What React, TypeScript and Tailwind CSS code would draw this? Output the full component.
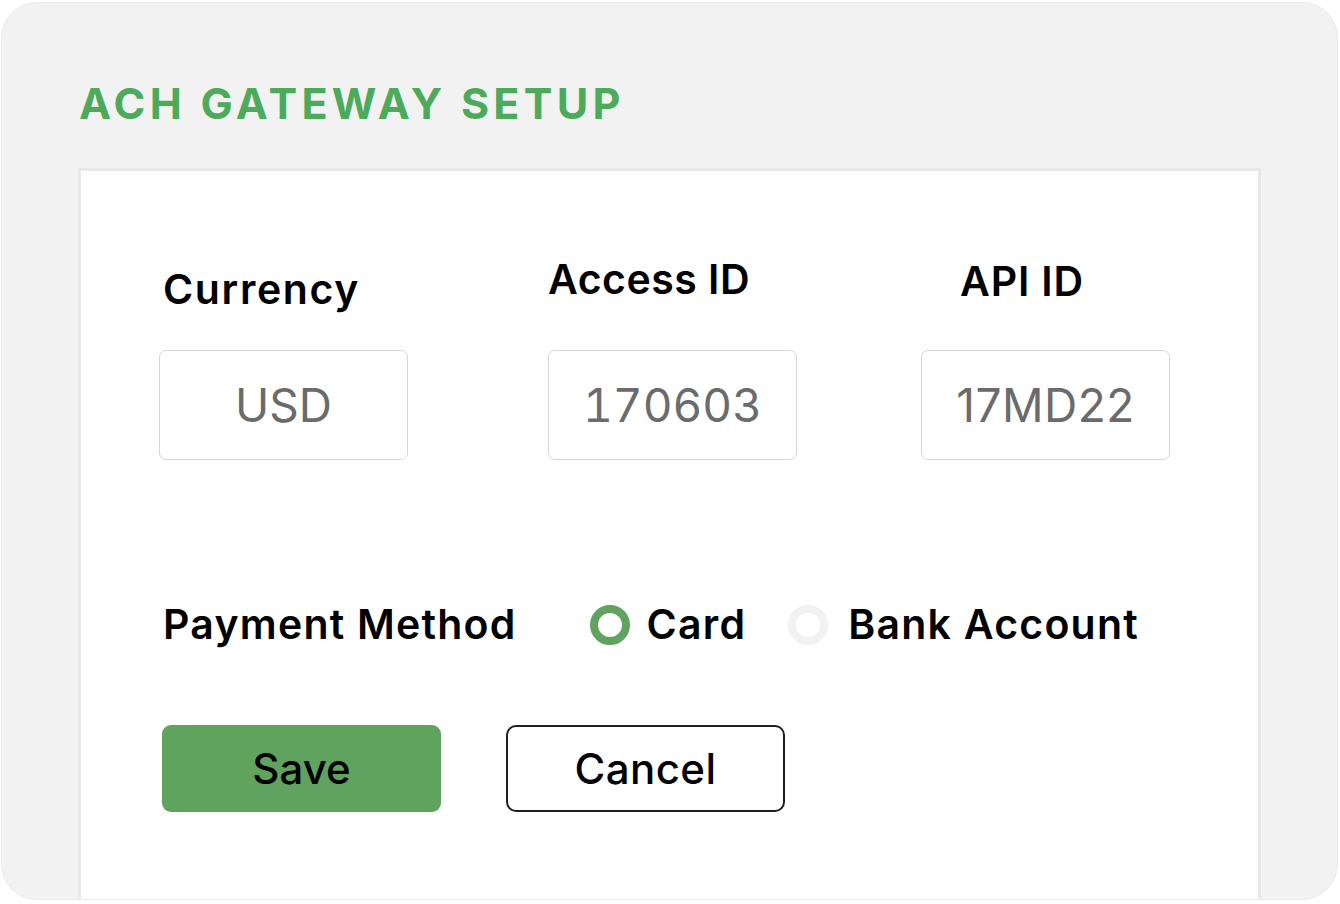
import React, { useState } from 'react';

const font = { fontFamily: 'Inter, "Noto Sans", sans-serif' };

function Field({ label, value, labelClass, valueClass = '' }: { label: string; value: string; labelClass: string; valueClass?: string }) {
  return (
    <div className="flex flex-col">
      <div className={`text-[41px] font-semibold leading-none text-black ${labelClass}`}>{label}</div>
      <div className={`w-[249px] h-[110px] border border-[#d6d6d6] rounded-[7px] flex items-center justify-center text-[46px] text-[#6b6b6b] ${valueClass}`}>
        {value}
      </div>
    </div>
  );
}

function Radio({ checked }: { checked: boolean }) {
  return (
    <span
      className={`w-[40px] h-[40px] rounded-full border-[8px] bg-white ${
        checked ? 'border-[#5fa35f]' : 'border-[#f2f2f2]'
      }`}
    />
  );
}

export default function App() {
  const [method, setMethod] = useState<'card' | 'bank'>('card');

  return (
    <div className="w-[1340px] h-[904px] bg-white pt-[2px] pl-[1px]" style={font}>
      <div className="w-[1337px] h-[898px] rounded-[36px] bg-[#f2f2f2] border border-[#ebebeb] overflow-hidden flex flex-col px-[76px]">
        {/* Title */}
        <h1 className="mt-[79px] ml-[1px] text-[43px] font-bold leading-none tracking-[0.1em] text-[#4caa5b]">
          ACH GATEWAY SETUP
        </h1>

        {/* Panel */}
        <div className="mt-[43px] flex-1 bg-white border-[3px] border-b-0 border-[#e8e8e8] pl-[78px]">
          <div className="flex mt-[88px]">
            <div className="w-[389px]">
              <Field label="Currency" value="USD" labelClass="ml-[4px] mt-[10px] mb-[40px] text-[39px] tracking-[0.04em]" />
            </div>
            <div className="w-[373px]">
              <Field label="Access ID" value="170603" labelClass="ml-[0px] mb-[50px] tracking-[0.012em]" valueClass="tabular-nums" />
            </div>
            <div>
              <Field label="API ID" value="17MD22" labelClass="ml-[39px] mt-[2px] mb-[48px] tracking-[0.02em]" valueClass="tracking-[0.01em]" />
            </div>
          </div>

          {/* Payment method */}
          <div className="flex items-center mt-[144px] ml-[4px] text-[41px] font-semibold leading-none tracking-[0.03em] text-black">
            <span>Payment Method</span>
            <button onClick={() => setMethod('card')} className="flex items-center ml-[73px]">
              <Radio checked={method === 'card'} />
              <span className="ml-[17px]">Card</span>
            </button>
            <button onClick={() => setMethod('bank')} className="flex items-center ml-[42px]">
              <Radio checked={method === 'bank'} />
              <span className="ml-[20px]">Bank Account</span>
            </button>
          </div>

          {/* Actions */}
          <div className="flex mt-[80px] ml-[3px] gap-[65px]">
            <button className="w-[279px] h-[87px] rounded-[9px] bg-[#5fa35f] text-[42px] font-medium text-black">
              Save
            </button>
            <button className="w-[279px] h-[87px] rounded-[10px] border-2 border-[#1f1f1f] bg-white text-[42px] font-medium tracking-[0.01em] text-black">
              Cancel
            </button>
          </div>
        </div>
      </div>
    </div>
  );
}
